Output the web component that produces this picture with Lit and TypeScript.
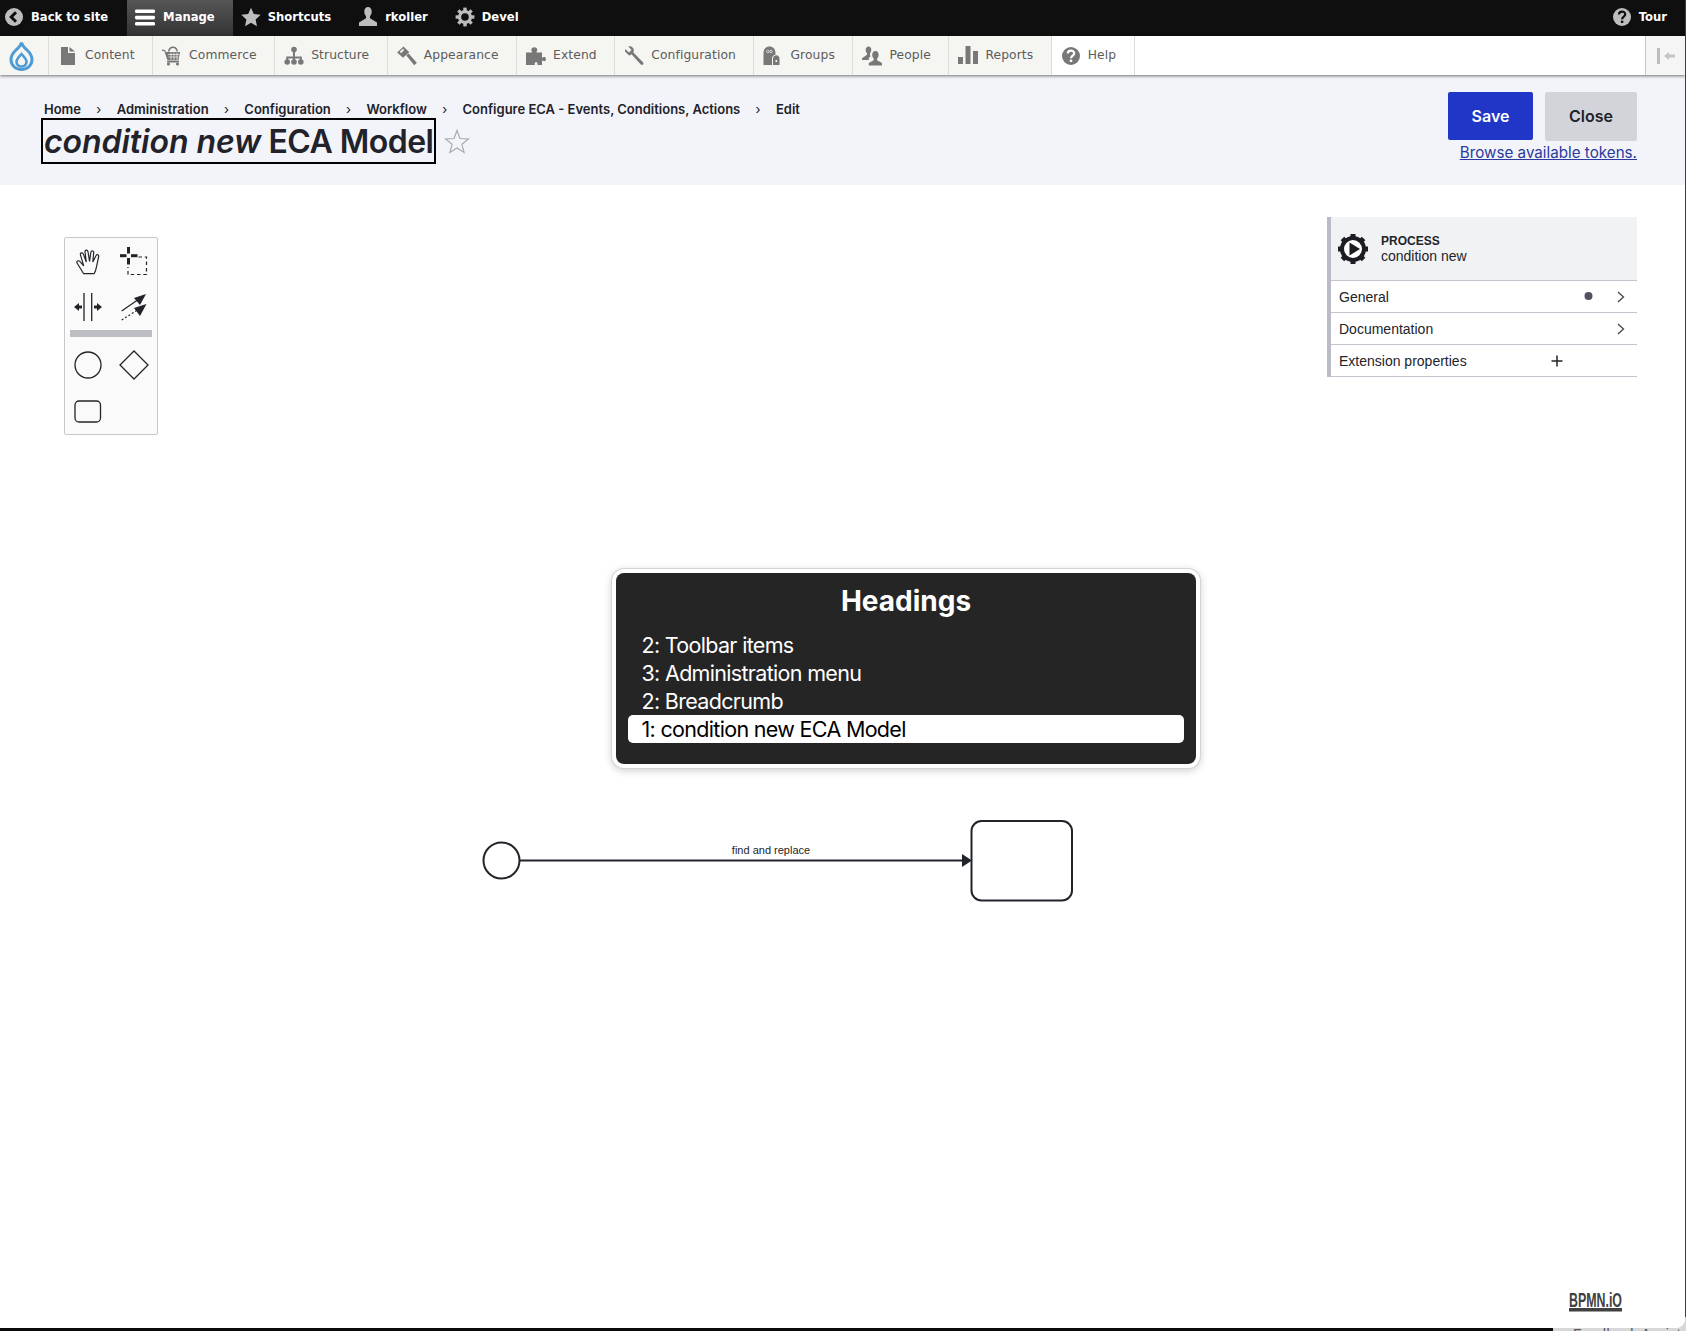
import { LitElement, html, css, svg } from "lit";
import { customElement } from "lit/decorators.js";

const gear = (cx: number, cy: number, r: number, toothW: number, toothH: number, n: number, fill: string) => {
  const teeth = [];
  for (let i = 0; i < n; i++) {
    const a = (360 / n) * i;
    teeth.push(svg`<rect x=${cx - toothW / 2} y=${cy - r - toothH} width=${toothW} height=${toothH + 2} fill=${fill} transform="rotate(${a} ${cx} ${cy})"></rect>`);
  }
  return teeth;
};

const I = {
  back: svg`<circle cx="10" cy="10" r="9" fill="#bdbdbd"/><path d="M12 5.2 7.2 10l4.8 4.8" fill="none" stroke="#0f0f0f" stroke-width="3"/>`,
  menu: svg`<rect x="0" y="2.5" width="20" height="3.6" rx="1.4" fill="#fff"/><rect x="0" y="8.8" width="20" height="3.6" rx="1.4" fill="#fff"/><rect x="0" y="15" width="20" height="3.6" rx="1.4" fill="#fff"/>`,
  star: svg`<path d="M10 .8l2.8 6.2 6.9.8-5.1 4.6 1.4 6.8L10 15.8l-6 3.4 1.4-6.8L.3 7.8 7.2 7z" fill="#bdbdbd"/>`,
  user: svg`<path d="M10 0C7.8 0 6.3 1.9 6.3 4.4c0 1.9.7 3.6 1.7 4.6v2.2L1 15.6V19h18v-3.4l-7-4.4V9c1-1 1.7-2.7 1.7-4.6C13.700 1.900 12.200 0 10 0z" fill="#bdbdbd"/>`,
  gear: svg`<circle cx="10" cy="10" r="5.4" fill="none" stroke="#bdbdbd" stroke-width="3.2"/>${gear(10, 10, 6.4, 3.4, 3, 8, "#bdbdbd")}`,
  tour: svg`<circle cx="10" cy="10" r="9" fill="#bdbdbd"/><path d="M7 7.600c0-4 6.200-4 6.200-.2 0 2.200-3.100 2.300-3.100 4.800" fill="none" stroke="#0f0f0f" stroke-width="2.200"/><rect x="8.900" y="13.600" width="2.400" height="2.400" fill="#0f0f0f"/>`,
  content: svg`<path d="M3 1h7v6h7v12H3z M11.500 1 17 5.600h-5.500z" fill="#787878"/>`,
  commerce: svg`<g fill="#787878"><path d="M0 3.500 3 4l1 2h14l-1.500 8.500h-11L2.400 5.300 0 4.800z"/><path d="M6 5.500C6.500 1.500 9 .5 11 .5s4.500 1 5 5h-1.500C14 3 12.500 2 11 2S8 3 7.500 5.500z"/><rect x="5" y="15" width="12" height="1.500"/><circle cx="6.500" cy="18" r="1.600"/><circle cx="15.500" cy="18" r="1.600"/></g><path d="M6 8.500h11M6.500 11h10M9 6.500v7.500M12 6.500v7.500M15 6.500v7.500" stroke="#f5f5f2" stroke-width=".7"/>`,
  structure: svg`<g fill="#787878"><circle cx="10" cy="3.600" r="2.800"/><rect x="9" y="5" width="2" height="6"/><path d="M2.200 14v-3.600h15.600V14h-2v-1.600H11V14H9v-1.600H4.200V14z"/><circle cx="3.200" cy="16" r="2.800"/><circle cx="10" cy="16" r="2.800"/><circle cx="16.800" cy="16" r="2.800"/></g>`,
  appearance: svg`<g fill="#787878"><path d="M6.500 .5 12.300 6.300 6 11.800 .2 6.400z"/><path d="M9.300 9.500 11.600 7.400 19.800 16.700 17.300 19.200z"/></g><path d="M3.400 6.500 6.600 3.400" stroke="#f5f5f2" stroke-width="1.800"/>`,
  extend: svg`<path d="M0 6.500h5.500c.6 0 .8-.5.4-1C5 4.500 5 1.200 8.300 1.200s3.400 3.300 2.400 4.300c-.4.500-.2 1 .4 1H16V11c0 .7.500.900 1 .5 1-.9 3-.5 3 1.600s-2 2.600-3 1.600c-.5-.4-1-.2-1 .5V19h-4.500v-1.500c0-1.800-2.800-1.800-2.800 0V19H0z" fill="#787878"/>`,
  config: svg`<path d="M1 5.500 4.600 9c.5.500 1.400.500 1.900.1l1-.8L16.800 18.500c.7.700 1.700.6 2.200 0 .6-.6.700-1.600 0-2.300L9.400 6.400c.8-2 .5-3.700-.8-5C7.500.300 6 0 4.300.500L7.500 4 5 6.500 1.600 3.300C1 4 .800 4.800 1 5.500z" fill="#787878"/>`,
  groups: svg`<path d="M.5 19V7.500C.5 3 3 .5 6.500.5s6 2.500 6 6.700V8.500c-2 .4-3.500 2-3.500 4V19z" fill="#787878"/><path d="M10 19v-6.500c0-2 1.500-3.300 3.300-3.300s3.200 1.300 3.200 3.300V19z" fill="#787878"/><circle cx="4.800" cy="5.500" r="1.300" fill="none" stroke="#f5f5f2" stroke-width=".7"/><circle cx="8" cy="5.500" r="1.300" fill="none" stroke="#f5f5f2" stroke-width=".7"/><rect x="12.500" y="14" width="1.600" height="2" fill="#f5f5f2"/>`,
  people: svg`<g fill="#787878"><path d="M6.500.5C4.800.5 3.700 2 3.700 3.800c0 1.400.5 2.600 1.300 3.400v1.500L0 12.300V14h6.800v-2.200l1.700-1.300-.5-1.500V7.200c.8-.8 1.300-2 1.300-3.400C9.300 2 8.200.5 6.500.5z"/><path d="M13.500 5c-2 0-3.300 1.600-3.300 3.700 0 1.600.6 3 1.500 3.800v1.800L6.800 17v2.500H20V17l-4.900-2.700v-1.800c.9-.8 1.500-2.200 1.500-3.800C16.600 6.600 15.500 5 13.500 5z"/></g>`,
  reports: svg`<g fill="#787878"><rect x="0" y="11" width="5" height="7"/><rect x="7.500" y="0" width="5" height="18"/><rect x="15" y="5" width="5" height="13"/></g>`,
  help: svg`<circle cx="10" cy="10" r="9" fill="#787878"/><path d="M6.800 7.600c0-4 6.400-4 6.400-.2 0 2.200-3.200 2.300-3.200 4.800" fill="none" stroke="#fff" stroke-width="2.200"/><rect x="8.800" y="13.600" width="2.400" height="2.400" fill="#fff"/>`,
};

const topLeft = [
  { label: "Back to site", icon: I.back, cls: "first" },
  { label: "Manage", icon: I.menu, cls: "active" },
  { label: "Shortcuts", icon: I.star, cls: "" },
  { label: "rkoller", icon: I.user, cls: "" },
  { label: "Devel", icon: I.gear, cls: "" },
];
const navItems = [
  { label: "Content", icon: I.content },
  { label: "Commerce", icon: I.commerce },
  { label: "Structure", icon: I.structure },
  { label: "Appearance", icon: I.appearance },
  { label: "Extend", icon: I.extend },
  { label: "Configuration", icon: I.config },
  { label: "Groups", icon: I.groups },
  { label: "People", icon: I.people },
  { label: "Reports", icon: I.reports },
  { label: "Help", icon: I.help, white: true },
];
const crumbs = ["Home", "Administration", "Configuration", "Workflow", "Configure ECA - Events, Conditions, Actions", "Edit"];

@customElement("app-root")
export class AppRoot extends LitElement {
  static styles = css`
    :host {
      display: block;
      position: relative;
      width: 1686px;
      height: 1331px;
      overflow: hidden;
      background: #3c3c46;
      font-family: "Liberation Sans", Arial, sans-serif;
    }
    .strip {
      position: absolute;
      left: 0;
      right: 0;
      bottom: 0;
      height: 14px;
      display: flex;
    }
    .strip-dark { width: 1553px; background: #0b0b0b; }
    .strip-light {
      flex: 1;
      background: #d8d8d8;
      overflow: hidden;
      padding: 10px 0 0 20px;
      font: 14px/14px "Liberation Sans", sans-serif;
      color: #555;
      white-space: nowrap;
      letter-spacing: 0.4px;
      box-sizing: border-box;
    }
    .page {
      position: relative;
      width: 1685px;
      height: 1328px;
      display: flex;
      flex-direction: column;
      background: #fff;
      border-bottom-right-radius: 9px;
      overflow: hidden;
    }
    .top {
      height: 36px;
      background: #0f0f0f;
      display: flex;
      flex: none;
      font: 700 11.6px/36px "DejaVu Sans", sans-serif;
      color: #fff;
    }
    .top-item {
      display: flex;
      align-items: center;
      gap: 7px;
      padding: 0 18px 2px 9px;
    }
    .top-item svg { width: 20px; height: 20px; flex: none; }
    .top-item.first { padding-left: 4px; padding-right: 19px; gap: 7px; }
    .top-item.active {
      background: linear-gradient(#565656, #333);
      padding-left: 8px;
      gap: 8px;
    }
    .top-item.active + .top-item { padding-left: 8px; }
    .top-spacer { flex: 1; }
    .nav {
      height: 39px;
      flex: none;
      display: flex;
      background: #fff;
      box-shadow: 0 1px 3px rgba(0, 0, 0, 0.55);
      position: relative;
      z-index: 2;
      font: 12.3px/39px "DejaVu Sans", sans-serif;
      color: #5c5c5c;
      letter-spacing: 0.1px;
    }
    .logo {
      width: 49px;
      flex: none;
      background: #f5f5f2;
      border-right: 1px solid #dcdcd8;
      display: flex;
      align-items: center;
      justify-content: center;
      box-sizing: border-box;
    }
    .logo svg { width: 25px; height: 31px; margin-right: 6px; }
    .nav-item {
      display: flex;
      align-items: center;
      gap: 7px;
      padding: 0 17.5px 0 9px;
      background: #f5f5f2;
      border-right: 1px solid #dcdcd8;
    }
    .nav-item.white { background: #fff; }
    .nav-item svg { width: 20px; height: 20px; flex: none; }
    .nav-spacer { flex: 1; }
    .collapse {
      width: 40px;
      box-sizing: border-box;
      border-left: 1px solid #c9c9c9;
      background: #f5f5f5;
      display: flex;
      align-items: center;
      justify-content: center;
    }
    .collapse svg { width: 20px; height: 16px; }
    .head {
      height: 110px;
      flex: none;
      background: #f3f4f9;
      display: flex;
      justify-content: space-between;
      padding: 0 48px 0 44px;
      box-sizing: border-box;
      color: #22222a;
    }
    .crumbs {
      display: flex;
      align-items: center;
      height: 18px;
      margin-top: 25px;
      font: 600 13px/18px Inter, sans-serif;
    }
    .sep { width: 35.7px; text-align: center; font-weight: 400; font-size: 13px; }
    .title-row { display: flex; align-items: center; margin-left: -3px; }
    h1 {
      margin: 0;
      height: 42px;
      border: 2px solid #000;
      padding: 0 1px;
      font: 600 32px/43px Inter, sans-serif;
      letter-spacing: -0.54px;
      white-space: nowrap;
    }
    h1 em { font-style: italic; letter-spacing: -0.05px; }
    .title-row svg { width: 26px; height: 25px; margin-left: 8px; margin-top: 1px; }
    .head-right { display: flex; flex-direction: column; align-items: flex-end; padding-top: 17px; }
    .btns { display: flex; gap: 12px; align-items: flex-start; }
    .btn {
      height: 48px;
      border-radius: 2px;
      font: 600 16px/48px Inter, sans-serif;
      text-align: center;
      box-sizing: border-box;
    }
    .save { width: 85px; background: #1f36c7; color: #fff; }
    .close { width: 92px; height: 49px; background: #d3d4d9; color: #22222a; }
    .link {
      font: 400 15.2px/20px Inter, sans-serif;
      color: #2a3a9e;
      text-decoration: underline;
      margin-top: 2px;
    }
    .canvas { flex: 1; position: relative; background: #fff; }
    .diagram { position: absolute; left: 0; top: 0; width: 1685px; height: 1143px; }
    .palette {
      position: absolute;
      left: 64px;
      top: 52px;
      width: 94px;
      height: 198px;
      box-sizing: border-box;
      background: #fafafa;
      border: 1px solid #c8c8cc;
      border-radius: 2px;
    }
    .palette svg { display: block; width: 92px; height: 196px; }
    .panel {
      position: absolute;
      left: 1327px;
      top: 32px;
      width: 310px;
      box-sizing: border-box;
      border-left: 4px solid #b9bbc6;
      font: 14px/18px "Liberation Sans", sans-serif;
      color: #22242a;
    }
    .panel-head {
      height: 64px;
      box-sizing: border-box;
      background: #f1f2f4;
      border-bottom: 1px solid #c4c5cc;
      display: flex;
      align-items: center;
      gap: 12px;
      padding-left: 6px;
    }
    .panel-head svg { width: 32px; height: 34px; flex: none; }
    .ph-text { display: flex; flex-direction: column; padding-top: 0; }
    .ph-type { font: 700 12px/16px "Liberation Sans", sans-serif; }
    .ph-name { font: 14px/15px "Liberation Sans", sans-serif; }
    .row {
      height: 32px;
      box-sizing: border-box;
      border-bottom: 1px solid #c4c5cc;
      display: flex;
      align-items: center;
      padding-left: 8px;
      position: relative;
    }
    .row svg { position: absolute; top: 9px; width: 14px; height: 14px; }
    .row .chev { left: 283px; }
    .row .plus { left: 219px; }
    .row .dot { left: 250px; top: 8px; }
    .dialog {
      position: absolute;
      left: 612px;
      top: 384px;
      width: 588px;
      height: 199px;
      box-sizing: border-box;
      padding: 4px;
      background: #fff;
      border-radius: 12px;
      box-shadow: 0 0 0 1px #d4d4d4, 0 2px 8px rgba(0, 0, 0, 0.22);
    }
    .dialog-in {
      height: 100%;
      background: #252525;
      border-radius: 8px;
      color: #fff;
      padding: 0 12px;
      box-sizing: border-box;
    }
    .dialog h2 {
      margin: 0;
      padding-top: 10px;
      height: 58px;
      box-sizing: border-box;
      text-align: center;
      font: 700 28px/36px Inter, sans-serif;
      letter-spacing: 0;
    }
    .dl { font: 400 21.5px/28px Inter, sans-serif; padding-left: 13.5px; letter-spacing: -0.68px; border-radius: 5px; white-space: nowrap; }
    .dl.sel { background: #fff; color: #000; }
    .logo-bpmn { position: absolute; left: 1569px; top: 1104px; width: 54px; height: 24px; overflow: visible; }
  `;

  render() {
    return html`
      <div class="strip">
        <div class="strip-dark"></div>
        <div class="strip-light">Feedback Assistant</div>
      </div>
      <div class="page">
        <div class="top">
          ${topLeft.map((t) => html`<div class="top-item ${t.cls}"><svg viewBox="0 0 20 20">${t.icon}</svg><span>${t.label}</span></div>`)}
          <div class="top-spacer"></div>
          <div class="top-item"><svg viewBox="0 0 20 20">${I.tour}</svg><span>Tour</span></div>
        </div>
        <div class="nav">
          <div class="logo">
            <svg viewBox="0 0 25 31">
              <path d="M12.500 2.500C12 6 9.500 7.500 7 10 4 12.800 2 15.500 2 19.500 2 25.500 6.800 29.500 12.500 29.500S23 25.500 23 19.500C23 15.500 21 12.800 18 10 15.500 7.500 13 6 12.500 2.500z" fill="none" stroke="#4f9bd4" stroke-width="3"/>
              <path d="M12.500 14c-2 2.500-5 4.500-5 7.800 0 2.800 2.300 4.700 5 4.700s5-1.900 5-4.700C17.500 18.500 14.500 16.500 12.500 14z" fill="none" stroke="#4f9bd4" stroke-width="2.600"/>
            </svg>
          </div>
          ${navItems.map((n) => html`<div class="nav-item ${n.white ? "white" : ""}"><svg viewBox="0 0 20 20">${n.icon}</svg><span>${n.label}</span></div>`)}
          <div class="nav-spacer"></div>
          <div class="collapse">
            <svg viewBox="0 0 20 16"><rect x="1" y="0" width="3" height="16" fill="#bdbdbd"/><path d="M8 8l5-4v2.500h6v3h-6V12z" fill="#c4c4c4"/></svg>
          </div>
        </div>
        <div class="head">
          <div>
            <div class="crumbs">
              ${crumbs.map((c, i) => html`${i ? html`<span class="sep">›</span>` : ""}<span>${c}</span>`)}
            </div>
            <div class="title-row">
              <h1><em>condition new</em> ECA Model</h1>
              <svg viewBox="0 0 26 25"><path d="M13 1.500l3 8 8.500.5-6.600 5.300 2.200 8.200L13 19l-7.100 4.500 2.200-8.200L1.500 10 10 9.500z" fill="none" stroke="#a9a9ae" stroke-width="1.200"/></svg>
            </div>
          </div>
          <div class="head-right">
            <div class="btns"><div class="btn save">Save</div><div class="btn close">Close</div></div>
            <div class="link">Browse available tokens.</div>
          </div>
        </div>
        <div class="canvas">
          <svg class="diagram" viewBox="0 0 1685 1143">
            <circle cx="501.500" cy="675.500" r="18" fill="#fff" stroke="#22242a" stroke-width="2"/>
            <path d="M520 675.500H962" stroke="#22242a" stroke-width="2.200"/>
            <path d="M962 669 972 675.500 962 682z" fill="#22242a"/>
            <rect x="971.500" y="636" width="100.500" height="79.500" rx="10" fill="#fff" stroke="#22242a" stroke-width="2"/>
            <text x="771" y="669" text-anchor="middle" font-family="Liberation Sans, sans-serif" font-size="11" fill="#22242a">find and replace</text>
          </svg>
          <div class="palette">
            <svg viewBox="0 0 92 196">
              <g transform="translate(8.300 8.400) scale(1.3)">
                <path d="M8 21 3 13c-1-1.600 1-2.600 2-1.400L8 15 5.500 6.500c-.5-1.600 1.700-2.200 2.200-.7L10 12 9 4.200c-.2-1.600 2-1.800 2.300-.2l1.200 7.500 1-7c.3-1.500 2.400-1.200 2.200.3L15 12l2.500-5c.6-1.300 2.400-.6 2 .8L18 15c-.5 3-1 4.500-2 6z" fill="none" stroke="#22242a" stroke-width=".9"/>
              </g>
              <g fill="#22242a" transform="translate(-1 -1)">
                <rect x="63" y="10" width="3" height="6.500"/><rect x="63" y="21" width="3" height="6.500"/>
                <rect x="56" y="17.200" width="6.500" height="3"/><rect x="67" y="17.200" width="6.500" height="3"/>
              </g>
              <path d="M73.500 19h8v17.500H63V29" fill="none" stroke="#22242a" stroke-width="1.200" stroke-dasharray="3.500 2.800"/>
              <path d="M19 55v28M26.700 55v28" stroke="#22242a" stroke-width="1.300"/>
              <path d="M9 69l5-4v2.500h3v3h-3v2.500zM37 69l-5-4v2.500h-3v3h3v2.500z" fill="#22242a"/>
              <path d="M56.700 73 74 61" stroke="#22242a" stroke-width="1.200"/>
              <path d="M81 56 69 60 75 67z" fill="#22242a"/>
              <path d="M56.700 82 74 71" stroke="#22242a" stroke-width="1.200" stroke-dasharray="2 2"/>
              <path d="M81.500 66 69 70 75 78z" fill="#22242a"/>
              <rect x="5" y="92" width="82" height="7" fill="#bdbec4"/>
              <circle cx="23" cy="127" r="13" fill="none" stroke="#22242a" stroke-width="1.300"/>
              <path d="M69 113 83 127 69 141 55 127z" fill="none" stroke="#22242a" stroke-width="1.300"/>
              <rect x="10" y="163" width="25.500" height="21" rx="4" fill="none" stroke="#22242a" stroke-width="1.300"/>
            </svg>
          </div>
          <div class="panel">
            <div class="panel-head">
              <svg viewBox="0 0 32 34">
                ${gear(16, 17, 11.5, 5, 3.500, 8, "#1c1c22")}
                <circle cx="16" cy="17" r="13" fill="#1c1c22"/>
                <circle cx="16" cy="17" r="9" fill="#fff"/>
                <path d="M12.500 10.500 23 17 12.500 23.500z" fill="#1c1c22"/>
              </svg>
              <div class="ph-text"><span class="ph-type">PROCESS</span><span class="ph-name">condition new</span></div>
            </div>
            <div class="row">General
              <svg class="dot" viewBox="0 0 14 14"><circle cx="7.500" cy="7" r="4" fill="#52525e"/></svg>
              <svg class="chev" viewBox="0 0 14 14"><path d="M4 2l5.500 5L4 12" fill="none" stroke="#44444c" stroke-width="1.300"/></svg>
            </div>
            <div class="row">Documentation
              <svg class="chev" viewBox="0 0 14 14"><path d="M4 2l5.500 5L4 12" fill="none" stroke="#44444c" stroke-width="1.300"/></svg>
            </div>
            <div class="row">Extension properties
              <svg class="plus" viewBox="0 0 14 14"><path d="M7 1.500v11M1.500 7h11" stroke="#22242a" stroke-width="1.500"/></svg>
            </div>
          </div>
          <div class="dialog">
            <div class="dialog-in">
              <h2>Headings</h2>
              <div class="dl">2: Toolbar items</div>
              <div class="dl">3: Administration menu</div>
              <div class="dl">2: Breadcrumb</div>
              <div class="dl sel">1: condition new ECA Model</div>
            </div>
          </div>
          <svg class="logo-bpmn" viewBox="0 0 54 24">
            <text x="0" y="17.500" font-family="Liberation Sans, sans-serif" font-weight="700" font-size="21" fill="#414141" textLength="53" lengthAdjust="spacingAndGlyphs">BPMN.iO</text>
            <rect x="0" y="19" width="53" height="3.500" fill="#414141"/>
          </svg>
        </div>
      </div>
    `;
  }
}
